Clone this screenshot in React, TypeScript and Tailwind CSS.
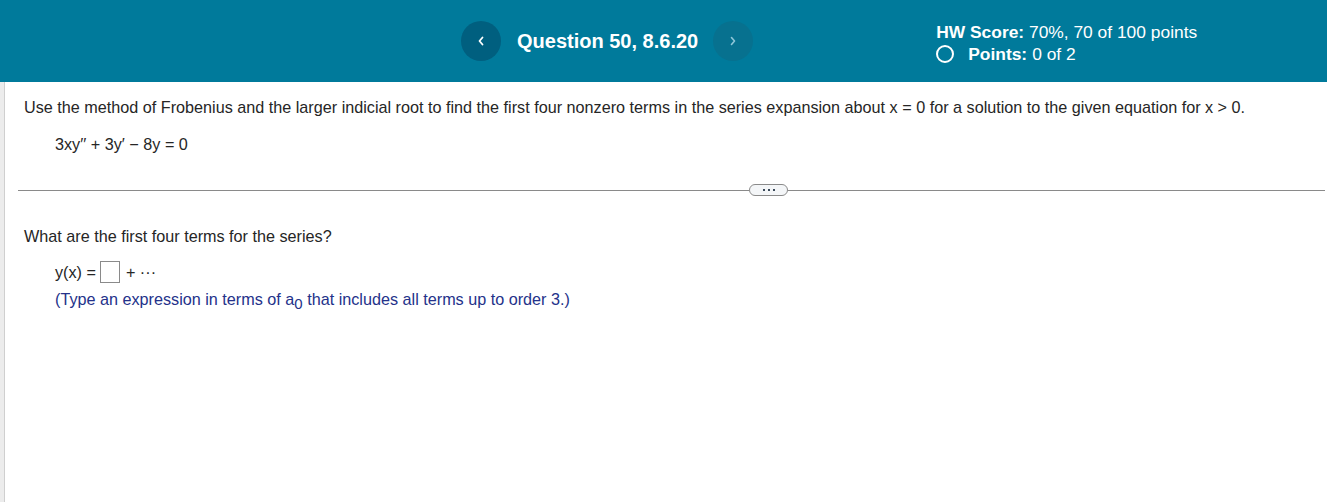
import React from "react";

// ─── Header ──────────────────────────────────────────────────────────────────

function NavButton({ dir, dark }: { dir: "prev" | "next"; dark?: boolean }) {
  return (
    <div
      className={`flex h-[40px] w-[40px] items-center justify-center rounded-full ${
        dark ? "bg-[#005f7f]" : "bg-[#07718f]"
      }`}
    >
      <svg width="8" height="12" viewBox="0 0 8 12" fill="none">
        {dir === "prev" ? (
          <path d="M5.5 2.5 L2.5 6 L5.5 9.5" stroke="#ffffff" strokeWidth="1.8" strokeLinecap="round" strokeLinejoin="round" />
        ) : (
          <path d="M2.5 2.5 L5.5 6 L2.5 9.5" stroke="#8fc6d8" strokeWidth="1.6" strokeLinecap="round" strokeLinejoin="round" />
        )}
      </svg>
    </div>
  );
}

function Header() {
  return (
    <div className="flex h-[82px] items-center bg-[#007a9b] pl-[461px] text-white">
      <NavButton dir="prev" dark />
      <div className="ml-[16px] text-[20px] font-bold">Question 50, 8.6.20</div>
      <div className="ml-[15px]">
        <NavButton dir="next" />
      </div>
      <div className="ml-[183px] flex flex-col pt-[3px] text-[17.4px] leading-[22px]">
        <div>
          <span className="font-bold">HW Score:</span> 70%, 70 of 100 points
        </div>
        <div className="flex items-center">
          <span className="inline-block h-[18px] w-[18px] rounded-full border-[2.5px] border-white" />
          <span className="ml-[14px] font-bold">Points:</span>
          <span className="ml-[5px]">0 of 2</span>
        </div>
      </div>
    </div>
  );
}

// ─── Body ────────────────────────────────────────────────────────────────────

function Divider() {
  return (
    <div className="ml-[13px] flex items-center">
      <div className="h-[1px] w-[731px] bg-[#8a8a8a]" />
      <div className="flex h-[12px] w-[39px] items-center justify-center gap-[3px] rounded-full border border-[#8a8a8a] bg-[#f4f6f8]">
        <span className="h-[2px] w-[2px] bg-[#3b4a5a]" />
        <span className="h-[2px] w-[2px] bg-[#3b4a5a]" />
        <span className="h-[2px] w-[2px] bg-[#3b4a5a]" />
      </div>
      <div className="h-[1px] flex-1 bg-[#8a8a8a]" />
    </div>
  );
}

export default function App() {
  return (
    <div
      className="h-[502px] w-[1327px] overflow-hidden bg-white text-[#262626]"
      style={{ fontFamily: '"Liberation Sans", Arial, sans-serif' }}
    >
      <Header />
      <div className="flex h-[420px]">
        <div className="w-[4px] bg-[#ececec]" />
        <div className="w-[1px] bg-[#cfcfcf]" />
        <div className="flex-1 pr-[2px] text-[16.2px] leading-[18px]">
          <div className="pl-[19px] pt-[16px]">
            Use the method of Frobenius and the larger indicial root to find the first four nonzero terms in the series
            expansion about x = 0 for a solution to the given equation for x &gt; 0.
          </div>
          <div className="pl-[50px] pt-[19px]">3xy′′ + 3y′ − 8y = 0</div>
          <div className="pt-[31px]">
            <Divider />
          </div>
          <div className="pl-[19px] pt-[31px]">What are the first four terms for the series?</div>
          <div className="flex items-center pl-[50px] pt-[16px]">
            <span>y(x) =</span>
            <span className="ml-[4px] inline-block h-[22px] w-[20px] border border-[#8a8a8a] bg-white" />
            <span className="ml-[6px]">+ ···</span>
          </div>
          <div className="pl-[50px] pt-[7px] text-[#24328a]">
            (Type an expression in terms of a<sub className="text-[15px]">0</sub> that includes all terms up to order 3.)
          </div>
        </div>
      </div>
    </div>
  );
}
